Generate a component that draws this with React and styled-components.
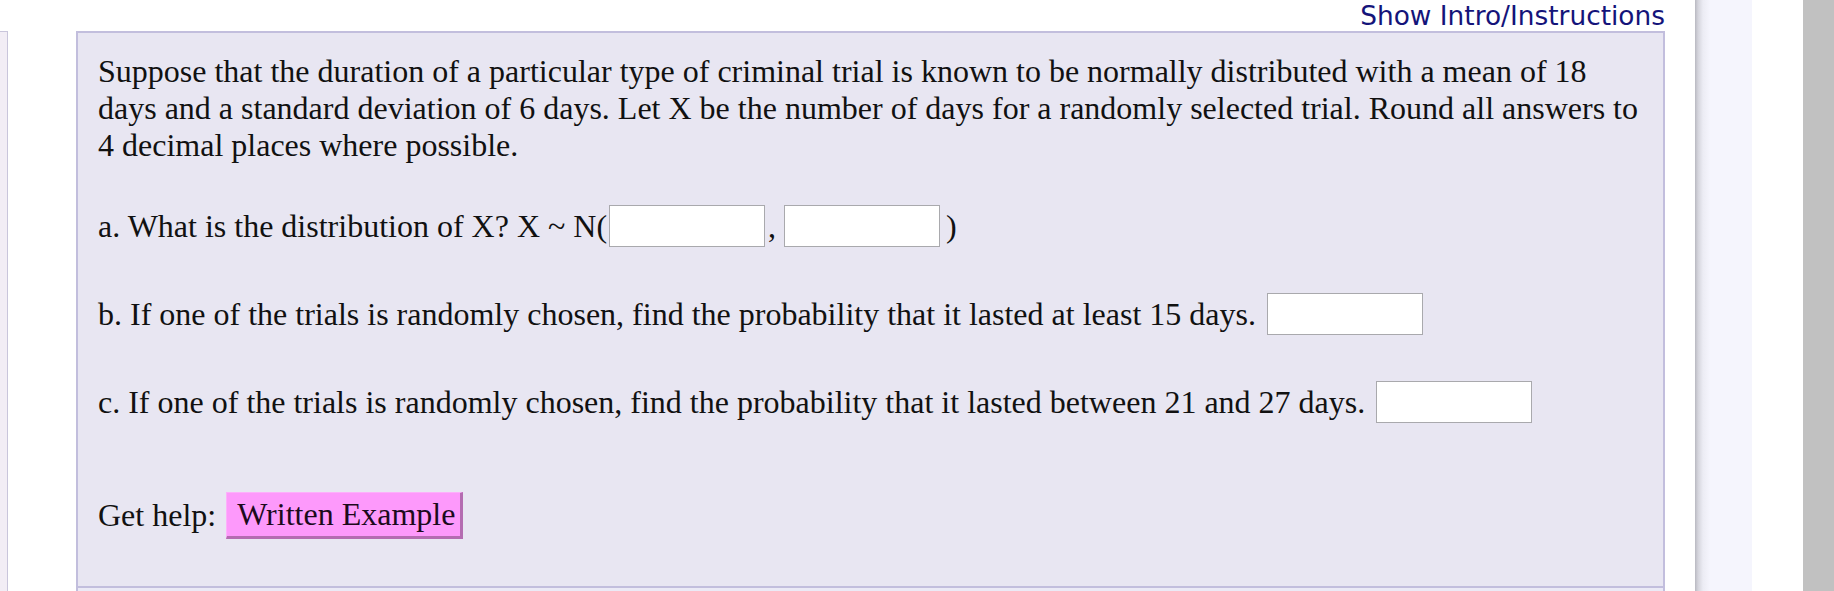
import React from "react";
import styled, { createGlobalStyle } from "styled-components";

const Global = createGlobalStyle`
  html, body { margin: 0; padding: 0; background: #ffffff; }
  body { overflow: hidden; }
`;

const Page = styled.div`
  display: flex;
  height: 591px;
  width: 1834px;
  overflow: hidden;
  background: #ffffff;
`;

const LeftStub = styled.div`
  width: 7px;
  margin-top: 31px;
  background: #f2edf5;
  border-top: 1px solid #c9c5db;
  border-right: 1px solid #c9c5db;
`;

const Main = styled.div`
  width: 1589px;
  margin-left: 68px;
  display: flex;
  flex-direction: column;
`;

const Header = styled.div`
  height: 31px;
  display: flex;
  justify-content: flex-end;
  align-items: flex-start;
`;

const IntroLink = styled.a`
  font-family: "DejaVu Sans", Verdana, sans-serif;
  font-size: 26.4px;
  line-height: 31px;
  color: #14147a;
  text-decoration: none;
  cursor: pointer;
`;

const Panel = styled.div`
  flex: 1;
  display: flex;
  flex-direction: column;
  background: #e8e6f2;
  border: 2px solid #c2bedd;
  border-bottom: none;
  padding: 20px 22px 0 20px;
  font-family: "Liberation Serif", "Times New Roman", serif;
  font-size: 32px;
  color: #111111;
`;

const Intro = styled.p`
  margin: 0;
  line-height: 37px;
`;

const Row = styled.div`
  display: flex;
  align-items: center;
  height: ${(p) => p.$h || 42}px;
  margin-top: ${(p) => p.$mt}px;
  line-height: 37px;
  white-space: pre;
`;

const Field = styled.input`
  box-sizing: border-box;
  width: 156px;
  height: 42px;
  margin: 0 ${(p) => p.$mr ?? 3}px 0 ${(p) => p.$ml ?? 3}px;
  padding: 2px 6px;
  border: 1px solid #a9a9ad;
  background: #ffffff;
  font-family: "Liberation Serif", serif;
  font-size: 24px;
  outline: none;
`;

const HelpLabel = styled.span`
  margin-right: 10px;
`;

const HelpButton = styled.button`
  box-sizing: border-box;
  height: 47px;
  padding: 3px 5px 3px 10px;
  background: #fd99fb;
  border-style: solid;
  border-width: 1px 3px 3px 1px;
  border-color: #fdb0fb #b46cb1 #b46cb1 #fdb0fb;
  font-family: "Liberation Serif", "Times New Roman", serif;
  font-size: 32px;
  line-height: 37px;
  color: #1c0a1c;
  cursor: pointer;
`;

const Footer = styled.div`
  flex: 1;
  margin: 47px -22px 0 -20px;
  border-top: 2px solid #c2bedd;
  background: #ebeaf6;
`;

const Gutter = styled.div`
  width: 30px;
`;

const Shade = styled.div`
  width: 57px;
  background: linear-gradient(
    to right,
    #b9b9c1 0px,
    #d4d4dc 3px,
    #ececf4 8px,
    #f5f5fd 15px,
    #f5f5fd 100%
  );
`;

const Blank = styled.div`
  width: 51px;
  background: #ffffff;
`;

const Scroll = styled.div`
  width: 31px;
  background: #c1c1c1;
`;

export default function App() {
  return (
    <>
      <Global />
      <Page>
        <LeftStub />
        <Main>
          <Header>
            <IntroLink>Show Intro/Instructions</IntroLink>
          </Header>
          <Panel>
            <Intro>
              Suppose that the duration of a particular type of criminal trial is known to be
              normally distributed with a mean of 18 days and a standard deviation of 6 days. Let X
              be the number of days for a randomly selected trial. Round all answers to 4 decimal
              places where possible.
            </Intro>
            <Row $mt={41}>
              <span>a. What is the distribution of X? X ~ N(</span>
              <Field $ml={2} $mr={3} />
              <span>, </span>
              <Field $ml={0} $mr={6} />
              <span>)</span>
            </Row>
            <Row $mt={46}>
              <span>b. If one of the trials is randomly chosen, find the probability that it lasted at least 15 days. </span>
              <Field />
            </Row>
            <Row $mt={46}>
              <span>c. If one of the trials is randomly chosen, find the probability that it lasted between 21 and 27 days. </span>
              <Field />
            </Row>
            <Row $mt={69} $h={47}>
              <HelpLabel>Get help:</HelpLabel>
              <HelpButton>Written Example</HelpButton>
            </Row>
            <Footer />
          </Panel>
        </Main>
        <Gutter />
        <Shade />
        <Blank />
        <Scroll />
      </Page>
    </>
  );
}
